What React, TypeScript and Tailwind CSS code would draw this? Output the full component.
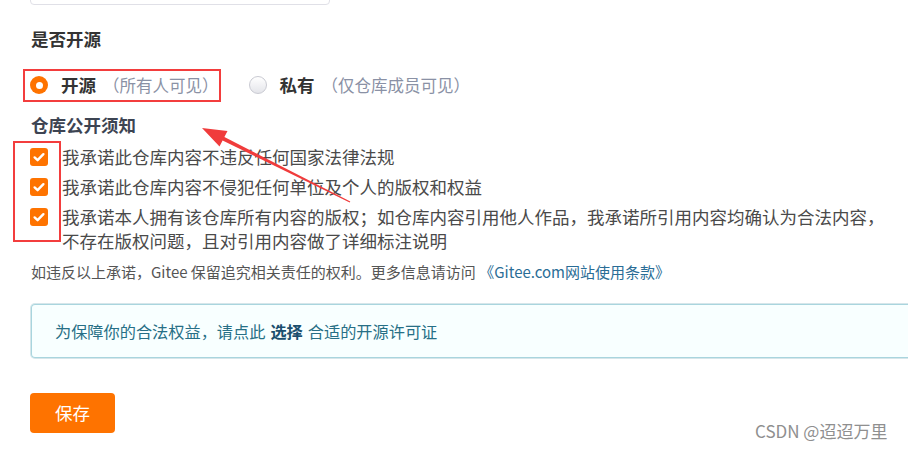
import type { ReactNode } from 'react';

const promises: string[] = [
  '我承诺此仓库内容不违反任何国家法律法规',
  '我承诺此仓库内容不侵犯任何单位及个人的版权和权益',
  '我承诺本人拥有该仓库所有内容的版权；如仓库内容引用他人作品，我承诺所引用内容均确认为合法内容，不存在版权问题，且对引用内容做了详细标注说明',
];

function CheckBox(): JSX.Element {
  return (
    <span className="mt-[3px] flex h-[18px] w-[18px] shrink-0 items-center justify-center rounded-[3px] bg-[#fe7300]">
      <svg width="18" height="18" viewBox="0 0 18 18" fill="none">
        <path
          d="M4.6 9.4 L7.6 12.2 L13.4 6.2"
          stroke="#fff"
          strokeWidth="2.4"
          strokeLinecap="round"
          strokeLinejoin="round"
        />
      </svg>
    </span>
  );
}

function RadioOption(props: {
  checked: boolean;
  label: string;
  hint: string;
  className?: string;
}): JSX.Element {
  const { checked, label, hint, className } = props;
  let dot: ReactNode;
  if (checked) {
    dot = (
      <span className="flex h-[18px] w-[18px] items-center justify-center rounded-full bg-[#fe7300]">
        <span className="h-[7px] w-[7px] rounded-full bg-white" />
      </span>
    );
  } else {
    dot = (
      <span className="h-[18px] w-[18px] rounded-full border border-[#c9cad2] bg-gradient-to-b from-white to-[#e4e5ea]" />
    );
  }
  return (
    <div className={`flex items-center ${className ?? ''}`}>
      {dot}
      <span className="ml-[13px] text-[17.5px] font-bold text-[#333]">{label}</span>
      <span className="ml-[7px] text-[16.5px] text-[#8a91a5]">{hint}</span>
    </div>
  );
}

export default function App(): JSX.Element {
  return (
    <div className="relative h-[449px] w-[908px] overflow-hidden bg-white font-['Noto_Sans_CJK_SC',sans-serif]">
      <div className="flex flex-col pl-[30px]">
        {/* bottom edge of the input above */}
        <div className="-mt-[36px] h-[41px] w-[300px] rounded-[4px] border border-[#e0e0e7]" />

        <h3 className="ml-px mt-[22px] text-[17.5px] font-bold leading-[24px] text-[#333]">是否开源</h3>

        <div className="mt-[18px] flex h-[32px] items-center">
          <RadioOption checked label="开源" hint="（所有人可见）" />
          <RadioOption checked={false} label="私有" hint="（仅仓库成员可见）" className="ml-[30px]" />
        </div>

        <h3 className="ml-px mt-[12px] text-[17.5px] font-bold leading-[24px] text-[#3d4452]">仓库公开须知</h3>

        <ul className="mt-[8px] flex flex-col gap-[6px]">
          {promises.map((text) => (
            <li key={text} className="flex items-start">
              <CheckBox />
              <span className="ml-[14px] w-[830px] text-[17.5px] leading-[24px] text-[#4a4a4a]">{text}</span>
            </li>
          ))}
        </ul>

        <p className="ml-px mt-[9px] text-[15px] leading-[20px] text-[#555]">
          如违反以上承诺，Gitee 保留追究相关责任的权利。更多信息请访问{' '}
          <span className="text-[#2a6d96]">《Gitee.com网站使用条款》</span>
        </p>

        <div className="ml-px mt-[22px] flex h-[54px] w-[900px] items-center rounded-[4px] bg-[#f8ffff] pl-[24px] text-[16.2px] text-[#276f86] shadow-[inset_0_0_0_1px_#a9d5de,0_0_0_1px_#d6e6ea]">
          为保障你的合法权益，请点此 <span className="mx-[5px] font-bold text-[#1b4f6e]">选择</span>合适的开源许可证
        </div>

        <button className="mt-[35px] h-[40px] w-[85px] rounded-[4px] bg-[#fe7300] text-[17.5px] text-white">
          保存
        </button>
      </div>

      {/* annotations */}
      <div className="absolute left-[23px] top-[69px] h-[33px] w-[198px] border-2 border-[#f33d3d]" />
      <div className="absolute left-[13px] top-[141px] h-[101px] w-[48px] border-2 border-[#f33d3d]" />
      <svg className="absolute left-0 top-0" width="908" height="449" viewBox="0 0 908 449">
        <polygon
          points="202,128 227.5,131 224.4,137 350.3,201.4 349.7,202.6 222.6,140.5 219.5,146.5"
          fill="#f03c3c"
        />
      </svg>

      <div className="absolute left-[755px] top-[421px] text-[17px] leading-[20px] text-[#8f8f8f]">CSDN @迢迢万里</div>
    </div>
  );
}
